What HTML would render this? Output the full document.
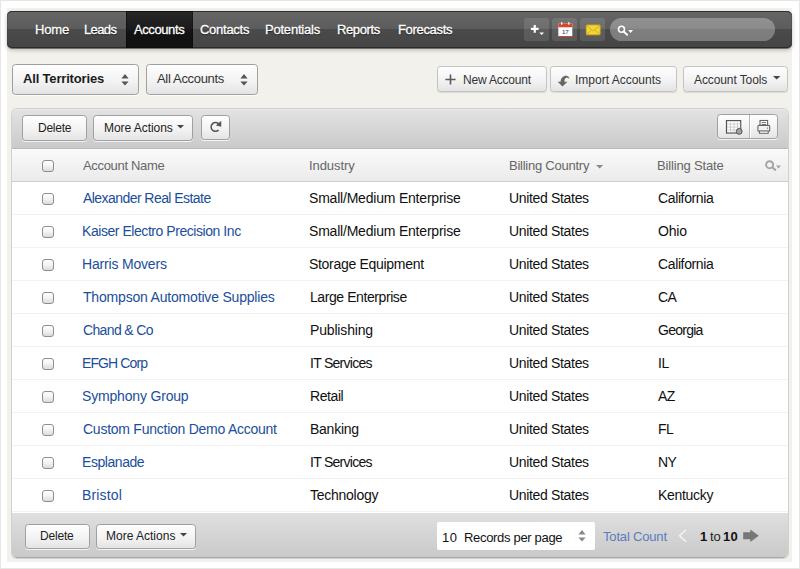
<!DOCTYPE html>
<html>
<head>
<meta charset="utf-8">
<title>Accounts</title>
<style>
*{box-sizing:border-box;margin:0;padding:0}
html,body{width:800px;height:569px;overflow:hidden;background:#fff}
body{font-family:"Liberation Sans",sans-serif;font-size:13px;color:#222;position:relative}
.frame{position:absolute;left:0;top:0;width:800px;height:569px;border:1px solid #e6e6e6;background:#fff}
.bg{position:absolute;left:7px;top:8px;width:785px;height:554px;background:#f3f1ec}
.t{position:absolute;white-space:nowrap}
svg{position:absolute;overflow:visible}
.nav{position:absolute;left:7px;top:11px;width:785px;height:37px;border-radius:5px;
 background:linear-gradient(#666 0,#5c5c5c 17.6px,#4a4a4a 18.4px,#454545 100%);
 box-shadow:0 0 0 1px rgba(40,40,40,.22) inset,0 1px 0 #333 inset,0 -1px 0 #2b2b2b inset,0 1px 0 rgba(45,45,45,.55),0 2px 4px rgba(0,0,0,.25)}
.nav .t{color:#fff;text-shadow:0 1px 1px rgba(0,0,0,.7);-webkit-text-stroke:.3px #fff}
.nav .act{position:absolute;left:119px;top:0;width:67px;height:37px;background:linear-gradient(#272727 0,#1c1c1c 45%,#121212 60%,#111 100%);box-shadow:1px 0 0 rgba(0,0,0,.35) inset,-1px 0 0 rgba(0,0,0,.25) inset;border-top:1px solid #111;border-bottom:1px solid #0c0c0c}
.nb{position:absolute;top:7px;height:23px;width:24.6px;border-radius:3px;background:linear-gradient(#747474 0,#6d6d6d 10.6px,#5d5d5d 11.4px,#5a5a5a 100%)}
.srch{position:absolute;left:603px;top:7px;width:165px;height:23px;border-radius:11.5px;background:linear-gradient(#919191 0,#8b8b8b 10.6px,#7f7f7f 11.4px,#7c7c7c 100%)}
.btn{position:absolute;border:1px solid #a0a0a0;border-radius:3.5px;background:linear-gradient(#fefefe,#f3f3f3 55%,#e4e4e4);color:#333;box-shadow:0 1px 0 rgba(255,255,255,.75)}
.btn.lt{border-color:#c4c4c4;box-shadow:0 1px 1px rgba(0,0,0,.10)}
.panel{position:absolute;left:12px;top:109px;width:776px;height:449px;border-radius:5px;background:#fff;overflow:hidden;box-shadow:0 0 0 1px rgba(0,0,0,.13)}
.tb{position:absolute;left:0;top:0;width:100%;height:40px;background:linear-gradient(#e3e3e3,#cacaca);border-bottom:1px solid #b9b9b9;box-shadow:0 1px 0 #e9e9e9 inset}
.hd{position:absolute;left:0;top:40px;width:100%;height:33px;background:linear-gradient(#fafafa,#ebebeb);border-bottom:1px solid #d0d0d0}
.hd .t{color:#666}
.row{position:absolute;left:0;width:100%;height:33px;border-bottom:1px solid #f2f2f2;background:#fff}
.row .t{color:#101010}
.row .t.lk{color:#1b4e9a}
.cb{position:absolute;left:30px;width:12px;height:12px;border:1px solid #8e8e8e;border-radius:3px;background:linear-gradient(#ffffff,#f4f4f4 45%,#dcdcdc)}
.bb{position:absolute;left:0;top:404px;width:100%;height:45px;background:linear-gradient(#dfdfdf,#c9c9c9);border-bottom:1px solid #a8a8a8}
.sel{position:absolute;left:425px;top:9px;width:158px;height:28px;background:#fff;border-radius:2px}
</style>
</head>
<body>
<div class="frame"></div>
<div class="bg"></div>
<div class="nav">
<div class="act"></div>
<span class="t" style="left:28.00px;top:10.80px;font-size:13px;line-height:15px;letter-spacing:-0.125px;">Home</span>
<span class="t" style="left:77.00px;top:10.80px;font-size:13px;line-height:15px;letter-spacing:-0.616px;">Leads</span>
<span class="t" style="left:127.00px;top:10.80px;font-size:13px;line-height:15px;letter-spacing:-0.402px;">Accounts</span>
<span class="t" style="left:193.00px;top:10.80px;font-size:13px;line-height:15px;letter-spacing:-0.271px;">Contacts</span>
<span class="t" style="left:258.00px;top:10.80px;font-size:13px;line-height:15px;letter-spacing:-0.216px;">Potentials</span>
<span class="t" style="left:330.00px;top:10.80px;font-size:13px;line-height:15px;letter-spacing:-0.384px;">Reports</span>
<span class="t" style="left:391.00px;top:10.80px;font-size:13px;line-height:15px;letter-spacing:-0.322px;">Forecasts</span>
<div class="nb" style="left:517.3px"></div>
<div class="nb" style="left:545.1px"></div>
<div class="nb" style="left:573.1px"></div>
<div class="srch"></div>
<svg style="left:0;top:0" width="785" height="37" viewBox="7 11 785 37">
<path d="M533.65 25.1 h2.2 v2.75 h2.75 v2.2 h-2.75 v2.75 h-2.2 v-2.75 h-2.75 v-2.2 h2.75 Z" fill="#fff"/>
<path d="M539.4 32.6 h4.6 l-2.3 2.5 Z" fill="#fff"/>
<g>
 <rect x="558.3" y="23.4" width="14" height="13.6" rx="1.2" fill="#fdfdfd"/>
 <path d="M558.3 27.2 v-2.4 q0 -1.3 1.3 -1.3 h11.4 q1.3 0 1.3 1.3 v2.4 Z" fill="#d8452b"/>
 <rect x="558.3" y="36" width="14" height="1" fill="#c8473a"/>
 <rect x="561.1" y="22" width="1.2" height="2.8" rx=".5" fill="#fff"/>
 <rect x="568.2" y="22" width="1.2" height="2.8" rx=".5" fill="#fff"/>
 <text x="565.3" y="34.2" font-family="Liberation Sans, sans-serif" font-size="6.2" fill="#173650" text-anchor="middle" letter-spacing="-0.1">17</text>
</g>
<g>
 <rect x="586.3" y="25" width="13.8" height="9.8" rx=".8" fill="#f3d63c" stroke="#d9ad0c" stroke-width=".9"/>
 <path d="M586.6 25.3 L593.2 31 L599.8 25.3 M586.6 34.5 L591.6 29.8 M599.8 34.5 L594.8 29.8" fill="none" stroke="#d2a40a" stroke-width=".8"/>
</g>
<circle cx="621.5" cy="29.2" r="3.0" fill="none" stroke="#fff" stroke-width="1.6"/>
<path d="M623.6 31.6 L627.2 34.7" stroke="#fff" stroke-width="2" stroke-linecap="round"/>
<path d="M628.2 30 h4.8 l-2.4 2.9 Z" fill="#fff"/>
</svg>
</div>
<div class="btn " style="left:12px;top:64px;width:127px;height:31px"><span class="t" style="left:10.00px;top:6.00px;font-size:13px;line-height:15px;letter-spacing:-0.171px;font-weight:bold;color:#1c1c1c;">All Territories</span><svg style="left:107.9px;top:8.700000000000003px" width="8" height="12" viewBox="0 0 8 12"><path d="M0.4 4.4 L4 0.1 L7.6 4.4 Z M0.4 7.4 L7.6 7.4 L4 11.6 Z" fill="#555"/></svg></div>
<div class="btn " style="left:146px;top:64px;width:112px;height:31px"><span class="t" style="left:10.00px;top:6.00px;font-size:13px;line-height:15px;letter-spacing:-0.317px;color:#333;">All Accounts</span><svg style="left:93.19999999999999px;top:8.700000000000003px" width="8" height="12" viewBox="0 0 8 12"><path d="M0.4 4.4 L4 0.1 L7.6 4.4 Z M0.4 7.4 L7.6 7.4 L4 11.6 Z" fill="#555"/></svg></div>
<div class="btn lt" style="left:437px;top:66px;width:110px;height:26px"><svg style="left:7.100000000000023px;top:6.900000000000006px" width="11" height="11" viewBox="0 0 11 11"><path d="M5.5 0.4 V10.6 M0.4 5.5 H10.6" stroke="#5a5a5a" stroke-width="1.6" fill="none"/></svg><span class="t" style="left:25.00px;top:5.70px;font-size:12px;line-height:14px;letter-spacing:-0.2px;color:#333;">New Account</span></div>
<div class="btn lt" style="left:550px;top:66px;width:127px;height:26px"><svg style="left:6px;top:8.099999999999994px" width="13" height="12" viewBox="557 74.5 13 12"><path d="M557.7 81.3 H567.4 L562.5 86 Z M560.6 81.6 C560.4 77.6 563.6 74.9 566.8 75.3 C568.6 75.6 569.5 77.2 569.3 78.6 C568.6 77.3 567.2 76.9 566.1 77.3 C564.7 77.9 564.4 79.6 564.4 81.6 Z" fill="#666"/></svg><span class="t" style="left:24.00px;top:5.70px;font-size:12px;line-height:14px;letter-spacing:0.0px;color:#333;">Import Accounts</span></div>
<div class="btn lt" style="left:683px;top:66px;width:105px;height:26px"><span class="t" style="left:10.00px;top:5.70px;font-size:12px;line-height:14px;letter-spacing:-0.097px;color:#333;">Account Tools</span><svg style="left:88.60000000000002px;top:9.400000000000006px" width="7.4" height="3.6" viewBox="0 0 7.4 3.6"><path d="M0 0 L7.4 0 L3.7 3.6 Z" fill="#444"/></svg></div>
<div class="panel">
<div class="tb">
<div class="btn " style="left:10px;top:6px;width:65px;height:26px"><span class="t" style="left:15.00px;top:5.20px;font-size:12px;line-height:14px;letter-spacing:-0.259px;color:#222;">Delete</span></div>
<div class="btn " style="left:81px;top:6px;width:100px;height:26px"><span class="t" style="left:10.00px;top:5.20px;font-size:12px;line-height:14px;letter-spacing:-0.053px;color:#222;">More Actions</span><svg style="left:83.4px;top:9px" width="7" height="3.4" viewBox="0 0 7 3.4"><path d="M0 0 L7 0 L3.5 3.4 Z" fill="#444"/></svg></div>
<div class="btn " style="left:189px;top:6px;width:29px;height:25px"><svg style="left:7px;top:4px" width="14" height="13" viewBox="209 120.5 14 13"><path d="M218.6 130.6 A4.4 4.4 0 1 1 218.9 124.6" fill="none" stroke="#555" stroke-width="1.5"/><path d="M221.2 121.2 L221.3 127.2 L215.9 126 Z" fill="#555"/></svg></div>
<div class="btn " style="left:705px;top:5px;width:61px;height:25px"><i style="position:absolute;left:31px;top:0;width:1px;height:100%;background:#b5b5b5;box-shadow:1px 0 0 #fff"></i><svg style="left:7px;top:4px" width="18" height="16" viewBox="725 119 18 16"><rect x="726.5" y="120.6" width="14.2" height="12.4" fill="#fff" stroke="#555" stroke-width="1.2"/><path d="M727 124 H740.5 M727 127 H740.5 M727 130 H740.5 M730.5 122.5 V132.5 M734 122.5 V132.5 M737.5 122.5 V132.5" stroke="#c4c4c4" stroke-width=".8" fill="none"/><circle cx="739.2" cy="131.4" r="2.9" fill="#a2a2a2" stroke="#555" stroke-width="1"/></svg><svg style="left:38px;top:4px" width="16" height="16" viewBox="756 119 16 16"><rect x="760" y="120.5" width="7.6" height="6" fill="#fff" stroke="#666" stroke-width="1.1"/><path d="M761.6 122.6 H766 M761.6 124.5 H766" stroke="#777" stroke-width="1"/><rect x="757.9" y="125.4" width="11.8" height="5.8" rx="1" fill="#f2f2f2" stroke="#666" stroke-width="1.1"/><rect x="759.4" y="131" width="8.8" height="2.3" fill="#fff" stroke="#666" stroke-width="1"/><rect x="767" y="127.6" width="1" height="1" fill="#555"/></svg></div>
</div>
<div class="hd">
<i class="cb" style="top:11px"></i>
<span class="t" style="left:71.00px;top:9.00px;font-size:13px;line-height:15px;letter-spacing:-0.325px;">Account Name</span>
<span class="t" style="left:297.00px;top:9.00px;font-size:13px;line-height:15px;letter-spacing:-0.066px;">Industry</span>
<span class="t" style="left:497.00px;top:9.00px;font-size:13px;line-height:15px;letter-spacing:-0.242px;">Billing Country</span>
<span class="t" style="left:645.00px;top:9.00px;font-size:13px;line-height:15px;letter-spacing:-0.162px;">Billing State</span>
<svg style="left:584.4px;top:15.599999999999994px" width="7.2" height="3.6" viewBox="0 0 7.2 3.6"><path d="M0 0 L7.2 0 L3.6 3.6 Z" fill="#888"/></svg>
<svg style="left:753px;top:10.5px" width="18" height="12" viewBox="765 159.5 18 12">
<circle cx="769.6" cy="164.2" r="3.5" fill="none" stroke="#a3a3a3" stroke-width="1.9"/>
<path d="M772.4 167 L775.3 169.4" stroke="#a3a3a3" stroke-width="2.1" stroke-linecap="round"/>
<path d="M776 165 h5 l-2.5 3 Z" fill="#a3a3a3"/></svg>
</div>
<div class="row" style="top:73px"><i class="cb" style="top:11px"></i><span class="t lk" style="left:71.00px;top:8.40px;font-size:14px;line-height:16px;letter-spacing:-0.557px;">Alexander Real Estate</span><span class="t" style="left:297.00px;top:8.40px;font-size:14px;line-height:16px;letter-spacing:-0.206px;">Small/Medium Enterprise</span><span class="t" style="left:497.00px;top:8.40px;font-size:14px;line-height:16px;letter-spacing:-0.33px;">United States</span><span class="t" style="left:646.00px;top:8.40px;font-size:14px;line-height:16px;letter-spacing:-0.375px;">California</span></div>
<div class="row" style="top:106px"><i class="cb" style="top:11px"></i><span class="t lk" style="left:70.00px;top:8.40px;font-size:14px;line-height:16px;letter-spacing:-0.446px;">Kaiser Electro Precision Inc</span><span class="t" style="left:297.00px;top:8.40px;font-size:14px;line-height:16px;letter-spacing:-0.206px;">Small/Medium Enterprise</span><span class="t" style="left:497.00px;top:8.40px;font-size:14px;line-height:16px;letter-spacing:-0.33px;">United States</span><span class="t" style="left:646.00px;top:8.40px;font-size:14px;line-height:16px;letter-spacing:-0.202px;">Ohio</span></div>
<div class="row" style="top:139px"><i class="cb" style="top:11px"></i><span class="t lk" style="left:70.00px;top:8.40px;font-size:14px;line-height:16px;letter-spacing:-0.181px;">Harris Movers</span><span class="t" style="left:297.00px;top:8.40px;font-size:14px;line-height:16px;letter-spacing:-0.302px;">Storage Equipment</span><span class="t" style="left:497.00px;top:8.40px;font-size:14px;line-height:16px;letter-spacing:-0.33px;">United States</span><span class="t" style="left:646.00px;top:8.40px;font-size:14px;line-height:16px;letter-spacing:-0.375px;">California</span></div>
<div class="row" style="top:172px"><i class="cb" style="top:11px"></i><span class="t lk" style="left:71.00px;top:8.40px;font-size:14px;line-height:16px;letter-spacing:-0.188px;">Thompson Automotive Supplies</span><span class="t" style="left:298.00px;top:8.40px;font-size:14px;line-height:16px;letter-spacing:-0.418px;">Large Enterprise</span><span class="t" style="left:497.00px;top:8.40px;font-size:14px;line-height:16px;letter-spacing:-0.33px;">United States</span><span class="t" style="left:646.00px;top:8.40px;font-size:14px;line-height:16px;letter-spacing:-0.5px;">CA</span></div>
<div class="row" style="top:205px"><i class="cb" style="top:11px"></i><span class="t lk" style="left:71.00px;top:8.40px;font-size:14px;line-height:16px;letter-spacing:-0.639px;">Chand &amp; Co</span><span class="t" style="left:298.00px;top:8.40px;font-size:14px;line-height:16px;letter-spacing:-0.167px;">Publishing</span><span class="t" style="left:497.00px;top:8.40px;font-size:14px;line-height:16px;letter-spacing:-0.33px;">United States</span><span class="t" style="left:646.00px;top:8.40px;font-size:14px;line-height:16px;letter-spacing:-0.742px;">Georgia</span></div>
<div class="row" style="top:238px"><i class="cb" style="top:11px"></i><span class="t lk" style="left:70.00px;top:8.40px;font-size:14px;line-height:16px;letter-spacing:-0.9px;">EFGH Corp</span><span class="t" style="left:298.00px;top:8.40px;font-size:14px;line-height:16px;letter-spacing:-0.716px;">IT Services</span><span class="t" style="left:497.00px;top:8.40px;font-size:14px;line-height:16px;letter-spacing:-0.33px;">United States</span><span class="t" style="left:646.00px;top:8.40px;font-size:14px;line-height:16px;letter-spacing:-0.5px;">IL</span></div>
<div class="row" style="top:271px"><i class="cb" style="top:11px"></i><span class="t lk" style="left:70.00px;top:8.40px;font-size:14px;line-height:16px;letter-spacing:-0.176px;">Symphony Group</span><span class="t" style="left:298.00px;top:8.40px;font-size:14px;line-height:16px;letter-spacing:-0.412px;">Retail</span><span class="t" style="left:497.00px;top:8.40px;font-size:14px;line-height:16px;letter-spacing:-0.33px;">United States</span><span class="t" style="left:646.00px;top:8.40px;font-size:14px;line-height:16px;letter-spacing:-0.5px;">AZ</span></div>
<div class="row" style="top:304px"><i class="cb" style="top:11px"></i><span class="t lk" style="left:71.00px;top:8.40px;font-size:14px;line-height:16px;letter-spacing:-0.25px;">Custom Function Demo Account</span><span class="t" style="left:298.00px;top:8.40px;font-size:14px;line-height:16px;letter-spacing:-0.25px;">Banking</span><span class="t" style="left:497.00px;top:8.40px;font-size:14px;line-height:16px;letter-spacing:-0.33px;">United States</span><span class="t" style="left:646.00px;top:8.40px;font-size:14px;line-height:16px;letter-spacing:-0.5px;">FL</span></div>
<div class="row" style="top:337px"><i class="cb" style="top:11px"></i><span class="t lk" style="left:70.00px;top:8.40px;font-size:14px;line-height:16px;letter-spacing:-0.443px;">Esplanade</span><span class="t" style="left:298.00px;top:8.40px;font-size:14px;line-height:16px;letter-spacing:-0.716px;">IT Services</span><span class="t" style="left:497.00px;top:8.40px;font-size:14px;line-height:16px;letter-spacing:-0.33px;">United States</span><span class="t" style="left:646.00px;top:8.40px;font-size:14px;line-height:16px;letter-spacing:-0.5px;">NY</span></div>
<div class="row" style="top:370px"><i class="cb" style="top:11px"></i><span class="t lk" style="left:70.00px;top:8.40px;font-size:14px;line-height:16px;letter-spacing:0.166px;">Bristol</span><span class="t" style="left:298.00px;top:8.40px;font-size:14px;line-height:16px;letter-spacing:-0.265px;">Technology</span><span class="t" style="left:497.00px;top:8.40px;font-size:14px;line-height:16px;letter-spacing:-0.33px;">United States</span><span class="t" style="left:646.00px;top:8.40px;font-size:14px;line-height:16px;letter-spacing:-0.311px;">Kentucky</span></div>
<div class="bb">
<div class="btn " style="left:13px;top:10.5px;width:65px;height:25.5px"><span class="t" style="left:14.00px;top:4.50px;font-size:12px;line-height:14px;letter-spacing:-0.185px;color:#222;">Delete</span></div>
<div class="btn " style="left:84px;top:10.5px;width:100px;height:25.5px"><span class="t" style="left:9.00px;top:4.50px;font-size:12px;line-height:14px;letter-spacing:0.003px;color:#222;">More Actions</span><svg style="left:83.4px;top:8.700000000000045px" width="7" height="3.4" viewBox="0 0 7 3.4"><path d="M0 0 L7 0 L3.5 3.4 Z" fill="#444"/></svg></div>
<div class="sel" style="left:425px;top:9px;width:158px;height:27.8px"><span class="t" style="left:5.00px;top:8.00px;font-size:13px;line-height:15px;letter-spacing:0.416px;color:#111;">10</span><span class="t" style="left:27.00px;top:8.00px;font-size:13px;line-height:15px;letter-spacing:-0.318px;color:#111;">Records per page</span><svg style="left:141px;top:8px" width="8" height="12" viewBox="0 0 8 12"><path d="M0.4 4.4 L4 0.1 L7.6 4.4 Z M0.4 7.4 L7.6 7.4 L4 11.6 Z" fill="#888"/></svg></div>
<span class="t" style="left:591.00px;top:16.00px;font-size:13px;line-height:15px;letter-spacing:-0.173px;color:#5b7cbd;">Total Count</span>
<svg style="left:666px;top:16px" width="82" height="14" viewBox="678 529 82 14">
<path d="M686 529.8 L679.6 535.8 L686 541.8" fill="none" stroke="#f4f4f4" stroke-width="1.5"/>
<path d="M743.2 532.3 H750.3 V529.5 L758.8 535.8 L750.3 542.1 V539.3 H743.2 Z" fill="#777"/></svg>
<span class="t" style="left:688.00px;top:16.00px;font-size:13px;line-height:15px;letter-spacing:0.0px;font-weight:bold;color:#111;">1</span><span class="t" style="left:698.00px;top:16.00px;font-size:13px;line-height:15px;letter-spacing:-0.092px;color:#222;">to</span><span class="t" style="left:711.00px;top:16.00px;font-size:13px;line-height:15px;letter-spacing:0.314px;font-weight:bold;color:#111;">10</span>
</div>
</div>
</body>
</html>
